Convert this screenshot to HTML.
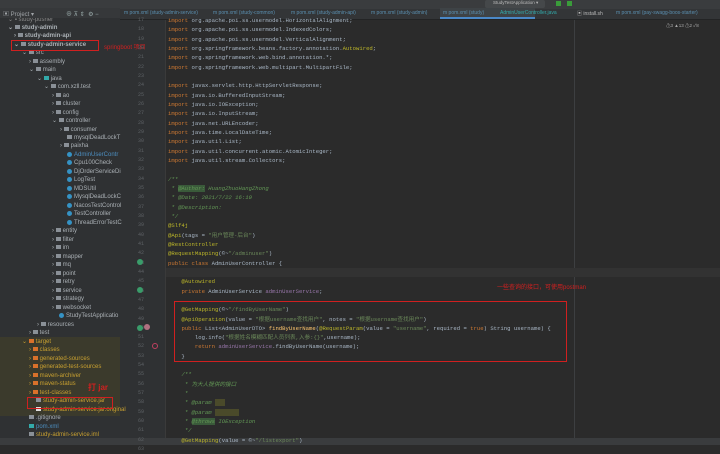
<!DOCTYPE html>
<html><head><meta charset="utf-8"><style>
*{margin:0;padding:0;box-sizing:border-box}
body{width:720px;height:445px;overflow:hidden;background:#2b2b2b;position:relative;font-family:"Liberation Sans","Noto Sans CJK SC",sans-serif}
.a{position:absolute;white-space:pre}
#top{position:absolute;left:0;top:0;width:720px;height:9px;background:#3a3c3e}
#tabs{position:absolute;left:120px;top:9px;width:600px;height:11px;background:#333537;border-bottom:1px solid #232425}
#left{position:absolute;left:0;top:9px;width:120px;height:436px;background:#2f3133}
#gut{position:absolute;left:120px;top:20px;width:46px;height:425px;background:#2f3133;border-right:1px solid #3a3a3a}
.t{position:absolute;font-size:6px;color:#aab0b5;white-space:pre;line-height:8px}
.ic{display:inline-block;width:5px;height:4px;background:#8a9097;margin-right:2px;vertical-align:middle}
.or{background:#d9712b}
.cl{background:#3592c4;border-radius:50%;width:5px;height:5px}
.c{position:absolute;left:168px;font-family:"Liberation Mono","Noto Sans CJK SC",monospace;font-size:5.6px;color:#a9b7c6;white-space:pre;line-height:9px}
.n{position:absolute;left:124px;width:20px;text-align:right;font-family:"Liberation Mono",monospace;font-size:5px;color:#5e6266;line-height:9.33px}
.k{color:#cc7832}.an{color:#bbb529}.s{color:#6a8759}.cm{color:#629755;font-style:italic}.pu{color:#9876aa}.f{color:#ffc66d}
.tab{position:absolute;top:10px;font-size:5px;color:#5a8fb0;white-space:pre}
</style></head><body>
<div id="top"></div>
<div id="left"></div>
<div id="tabs"></div>
<div class="t" style="left:8px;top:16px;color:#888">⌄ ▪ study-pusher</div>
<div class="a" style="left:0;top:8px;width:120px;height:10px;background:#36383a"></div>
<div class="a" style="left:3px;top:9px;font-size:6px;color:#a0a4a8">▣ Project ▾</div>
<div class="a" style="left:66px;top:9px;font-size:6px;color:#9aa">⊕ ⊼ ⇕  ⚙ −</div>
<div class="a" style="left:440px;top:8px;width:95px;height:11px;background:#3e4346;border-bottom:2px solid #4a88c7"></div>
<div class="tab" style="left:124px">m pom.xml (study-admin-service)</div>
<div class="tab" style="left:213px">m pom.xml (study-common)</div>
<div class="tab" style="left:291px">m pom.xml (study-admin-api)</div>
<div class="tab" style="left:371px">m pom.xml (study-admin)</div>
<div class="tab" style="left:443px">m pom.xml (study)</div>
<div class="tab" style="left:500px;color:#3aa">AdminUserController.java</div>
<div class="tab" style="left:577px;color:#bbb">▣ install.sh</div>
<div class="tab" style="left:616px">m pom.xml (pay-swagg-boos-starter)</div>
<div class="a" style="left:485px;top:0;width:60px;height:8px;background:#45484a;border-radius:2px;font-size:4.5px;color:#bbb;padding-left:8px">StudyTestApplication ▾</div>
<div class="a" style="left:556px;top:1px;width:5px;height:5px;background:#3a9c3a"></div>
<div class="a" style="left:567px;top:1px;width:5px;height:5px;background:#3a9c3a"></div>
<div class="a" style="left:666px;top:23px;font-size:4.5px;color:#aaa">⚠3 ▲13 ⚠2 ✓8</div>
<div id="gut"></div>
<div class="a" style="left:574px;top:20px;width:1px;height:425px;background:#3d3f41"></div>
<div class="a" style="left:166px;top:268px;width:554px;height:9px;background:#323232"></div>
<div class="a" style="left:0;top:337px;width:120px;height:79px;background:#3b3a2c"></div>
<div class="a" style="left:0;top:438px;width:720px;height:7px;background:#3a3c3e"></div>

<!-- tree -->
<div class="t" style="left:8px;top:24px;font-weight:bold">⌄ <span class="ic"></span>study-admin</div>
<div class="t" style="left:14px;top:32px;font-weight:bold">› <span class="ic"></span>study-admin-api</div>
<div class="t" style="left:14px;top:41px;font-weight:bold">⌄ <span class="ic"></span>study-admin-service</div>
<div class="t" style="left:22px;top:49px">⌄ <span class="ic"></span>src</div>
<div class="t" style="left:29px;top:58px">› <span class="ic"></span>assembly</div>
<div class="t" style="left:29px;top:66px">⌄ <span class="ic"></span>main</div>
<div class="t" style="left:37px;top:75px">⌄ <span class="ic" style="background:#3aa"></span>java</div>
<div class="t" style="left:44px;top:83px">⌄ <span class="ic"></span>com.xzll.test</div>
<div class="t" style="left:52px;top:92px">› <span class="ic"></span>ao</div>
<div class="t" style="left:52px;top:100px">› <span class="ic"></span>cluster</div>
<div class="t" style="left:52px;top:109px">› <span class="ic"></span>config</div>
<div class="t" style="left:52px;top:117px">⌄ <span class="ic"></span>controller</div>
<div class="t" style="left:60px;top:126px">› <span class="ic"></span>consumer</div>
<div class="t" style="left:67px;top:134px"><span class="ic"></span>mysqlDeadLockT</div>
<div class="t" style="left:60px;top:142px">› <span class="ic"></span>paixha</div>
<div class="t" style="left:67px;top:151px;color:#4c8ec0"><span class="ic cl"></span>AdminUserContr</div>
<div class="t" style="left:67px;top:159px"><span class="ic cl"></span>Cpu100Check</div>
<div class="t" style="left:67px;top:168px"><span class="ic cl"></span>DjOrderServiceDi</div>
<div class="t" style="left:67px;top:176px"><span class="ic cl"></span>LogTest</div>
<div class="t" style="left:67px;top:185px"><span class="ic cl"></span>MDSUtil</div>
<div class="t" style="left:67px;top:193px"><span class="ic cl"></span>MysqlDeadLockC</div>
<div class="t" style="left:67px;top:202px"><span class="ic cl"></span>NacosTestControl</div>
<div class="t" style="left:67px;top:210px"><span class="ic cl"></span>TestController</div>
<div class="t" style="left:67px;top:219px"><span class="ic cl"></span>ThreadErrorTestC</div>
<div class="t" style="left:52px;top:227px">› <span class="ic"></span>entity</div>
<div class="t" style="left:52px;top:236px">› <span class="ic"></span>filter</div>
<div class="t" style="left:52px;top:244px">› <span class="ic"></span>im</div>
<div class="t" style="left:52px;top:253px">› <span class="ic"></span>mapper</div>
<div class="t" style="left:52px;top:261px">› <span class="ic"></span>mq</div>
<div class="t" style="left:52px;top:270px">› <span class="ic"></span>point</div>
<div class="t" style="left:52px;top:278px">› <span class="ic"></span>retry</div>
<div class="t" style="left:52px;top:287px">› <span class="ic"></span>service</div>
<div class="t" style="left:52px;top:295px">› <span class="ic"></span>strategy</div>
<div class="t" style="left:52px;top:304px">› <span class="ic"></span>websocket</div>
<div class="t" style="left:59px;top:312px"><span class="ic cl"></span>StudyTestApplicatio</div>
<div class="t" style="left:37px;top:321px">› <span class="ic"></span>resources</div>
<div class="t" style="left:29px;top:329px">› <span class="ic"></span>test</div>
<div class="t" style="left:22px;top:338px;color:#c8a030">⌄ <span class="ic or"></span>target</div>
<div class="t" style="left:29px;top:346px;color:#c8a030">› <span class="ic or"></span>classes</div>
<div class="t" style="left:29px;top:355px;color:#c8a030">› <span class="ic or"></span>generated-sources</div>
<div class="t" style="left:29px;top:363px;color:#c8a030">› <span class="ic or"></span>generated-test-sources</div>
<div class="t" style="left:29px;top:372px;color:#c8a030">› <span class="ic or"></span>maven-archiver</div>
<div class="t" style="left:29px;top:380px;color:#c8a030">› <span class="ic or"></span>maven-status</div>
<div class="t" style="left:29px;top:389px;color:#c8a030">› <span class="ic or"></span>test-classes</div>
<div class="t" style="left:36px;top:397px;color:#c8a030"><span class="ic"></span>study-admin-service.jar</div>
<div class="t" style="left:36px;top:406px;color:#c8a030"><span class="ic" style="background:#ddd"></span>study-admin-service.jar.original</div>
<div class="t" style="left:29px;top:414px"><span class="ic"></span>.gitignore</div>
<div class="t" style="left:29px;top:423px;color:#4c8ec0"><span class="ic" style="background:#3aa"></span>pom.xml</div>
<div class="t" style="left:29px;top:431px;color:#c8a030"><span class="ic"></span>study-admin-service.iml</div>

<!-- red annotations -->
<div class="a" style="left:11px;top:40px;width:88px;height:11px;border:1px solid #d02020"></div>
<div class="a" style="left:104px;top:42px;font-size:6px;color:#d02020">springboot 项目</div>
<div class="a" style="left:27px;top:397px;width:86px;height:12px;border:1px solid #d02020"></div>
<div class="a" style="left:88px;top:382px;font-size:8px;font-weight:bold;color:#d02020">打 jar</div>
<div class="a" style="left:174px;top:301px;width:393px;height:61px;border:1px solid #d02020"></div>
<div class="a" style="left:497px;top:282px;font-size:6px;color:#d02020">一些查询的接口，可使用postman</div>

<!-- line numbers -->
<div class="n" style="top:16px">17<br>18<br>19<br>20<br>21<br>22<br>23<br>24<br>25<br>26<br>27<br>28<br>29<br>30<br>31<br>32<br>33<br>34<br>35<br>36<br>37<br>38<br>39<br>40<br>41<br>42<br>43<br>44<br>45<br>46<br>47<br>48<br>49<br>50<br>51<br>52<br>53<br>54<br>55<br>56<br>57<br>58<br>59<br>60<br>61<br>62<br>63</div>
<div class="a" style="left:137px;top:259px;width:6px;height:6px;border-radius:50%;background:#3a9c6a"></div>
<div class="a" style="left:137px;top:287px;width:6px;height:6px;border-radius:50%;background:#3a9c6a"></div>
<div class="a" style="left:137px;top:325px;width:6px;height:6px;border-radius:50%;background:#3a9c6a"></div>
<div class="a" style="left:144px;top:324px;width:6px;height:6px;border-radius:50%;background:#b07080"></div>
<div class="a" style="left:152px;top:343px;width:6px;height:6px;border-radius:50%;border:1px solid #c04060"></div>

<!-- code -->
<div class="c" style="top:16px;line-height:9.33px"><span class="k">import</span> org.apache.poi.ss.usermodel.HorizontalAlignment;
<span class="k">import</span> org.apache.poi.ss.usermodel.IndexedColors;
<span class="k">import</span> org.apache.poi.ss.usermodel.VerticalAlignment;
<span class="k">import</span> org.springframework.beans.factory.annotation.<span class="an">Autowired</span>;
<span class="k">import</span> org.springframework.web.bind.annotation.*;
<span class="k">import</span> org.springframework.web.multipart.MultipartFile;

<span class="k">import</span> javax.servlet.http.HttpServletResponse;
<span class="k">import</span> java.io.BufferedInputStream;
<span class="k">import</span> java.io.IOException;
<span class="k">import</span> java.io.InputStream;
<span class="k">import</span> java.net.URLEncoder;
<span class="k">import</span> java.time.LocalDateTime;
<span class="k">import</span> java.util.List;
<span class="k">import</span> java.util.concurrent.atomic.AtomicInteger;
<span class="k">import</span> java.util.stream.Collectors;

<span class="cm">/**</span>
<span class="cm"> * <span style="background:#3a5a3a">@Author:</span> HuangZhuoHangZhong</span>
<span class="cm"> * @Date: 2021/7/22 16:10</span>
<span class="cm"> * @Description:</span>
<span class="cm"> */</span>
<span class="an">@Slf4j</span>
<span class="an">@Api</span>(tags = <span class="s">"用户管理-后台"</span>)
<span class="an">@RestController</span>
<span class="an">@RequestMapping</span>(©~<span class="s">"/adminuser"</span>)
<span class="k">public class</span> AdminUserController {

    <span class="an">@Autowired</span>
    <span class="k">private</span> AdminUserService <span class="pu">adminUserService</span>;

    <span class="an">@GetMapping</span>(©~<span class="s">"/findByUserName"</span>)
    <span class="an">@ApiOperation</span>(value = <span class="s">"根据username查找用户"</span>, notes = <span class="s">"根据username查找用户"</span>)
    <span class="k">public</span> List&lt;AdminUserDTO&gt; <span class="f">findByUserName</span>(<span class="an">@RequestParam</span>(value = <span class="s">"username"</span>, required = <span class="k">true</span>) String username) {
        log.info(<span class="s">"根据姓名模糊匹配人员列表,入参:{}"</span>,username);
        <span class="k">return</span> <span class="pu">adminUserService</span>.findByUserName(username);
    }

    <span class="cm">/**</span>
<span class="cm">     * 为大人提供的接口</span>
<span class="cm">     *</span>
<span class="cm">     * @param <span style="background:#4a4a2a">   </span></span>
<span class="cm">     * @param <span style="background:#4a4a2a">       </span></span>
<span class="cm">     * <span style="background:#3a5a3a">@throws</span> IOException</span>
<span class="cm">     */</span>
    <span class="an">@GetMapping</span>(value = ©~<span class="s">"/listexport"</span>)</div>
</body></html>
